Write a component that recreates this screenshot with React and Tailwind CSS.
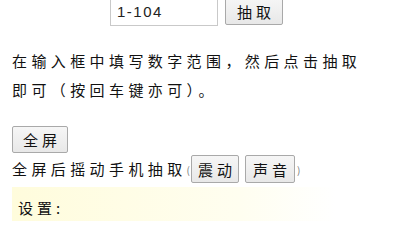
import React from 'react'

const cjk = { fontFamily: '"Noto Sans CJK SC", "Noto Sans", sans-serif' }

const Btn = ({ children, className = '' }) => (
    <button
        className={`border border-[#a9a9a9] bg-linear-to-b from-[#f6f6f6] to-[#e8e8e8] rounded-[2px] text-[15px] leading-none tracking-[4px] text-[#111] ${className}`}
    >
        {children}
    </button>
)

const App = () => {
    const [range, setRange] = React.useState('1-104')

    return (
        <div className="w-[393px] h-[221px] overflow-hidden bg-white text-[#111]" style={cjk}>
            {/* top input row, page is scrolled a little */}
            <div className="flex justify-center items-center gap-[7px] -mt-[4px]">
                <input
                    value={range}
                    onChange={(e) => setRange(e.target.value)}
                    className="h-[30px] w-[108px] border border-[#c9c9c9] pl-[6px] text-[15px] tracking-[1.5px] font-light text-[#222] outline-none"
                    style={{ fontFamily: '"Liberation Sans", sans-serif' }}
                />
                <Btn className="h-[28px] w-[58px] pl-[4px]">抽取</Btn>
            </div>

            <p className="mt-[20px] ml-[12px] w-[358px] text-[15px] leading-[29px] tracking-[4.4px]">
                在输入框中填写数字范围，然后点击抽取即可（按回车键亦可）。
            </p>

            <div className="mt-[22px] ml-[12px]">
                <Btn className="h-[27px] w-[56px] pl-[4px]">全屏</Btn>
            </div>

            <div className="mt-[2px] ml-[12px] flex items-center h-[28px] text-[15px]">
                <span className="tracking-[4.4px]">全屏后摇动手机抽取</span>
                <span className="text-[10px] text-[#777] mr-[1px]">(</span>
                <Btn className="h-[28px] w-[48px] pl-[4px]">震动</Btn>
                <Btn className="h-[28px] w-[50px] pl-[4px] ml-[6px]">声音</Btn>
                <span className="text-[10px] text-[#777] ml-[2px]">)</span>
            </div>

            <div className="mt-[4px] ml-[12px] h-[40px] bg-linear-to-r from-[#fffcdc] via-[#fffef0] via-60% to-white to-[85%] pl-[6px] pt-[8px]">
                <span className="text-[15px] tracking-[4px]">设置:</span>
            </div>
        </div>
    )
}

export default App
